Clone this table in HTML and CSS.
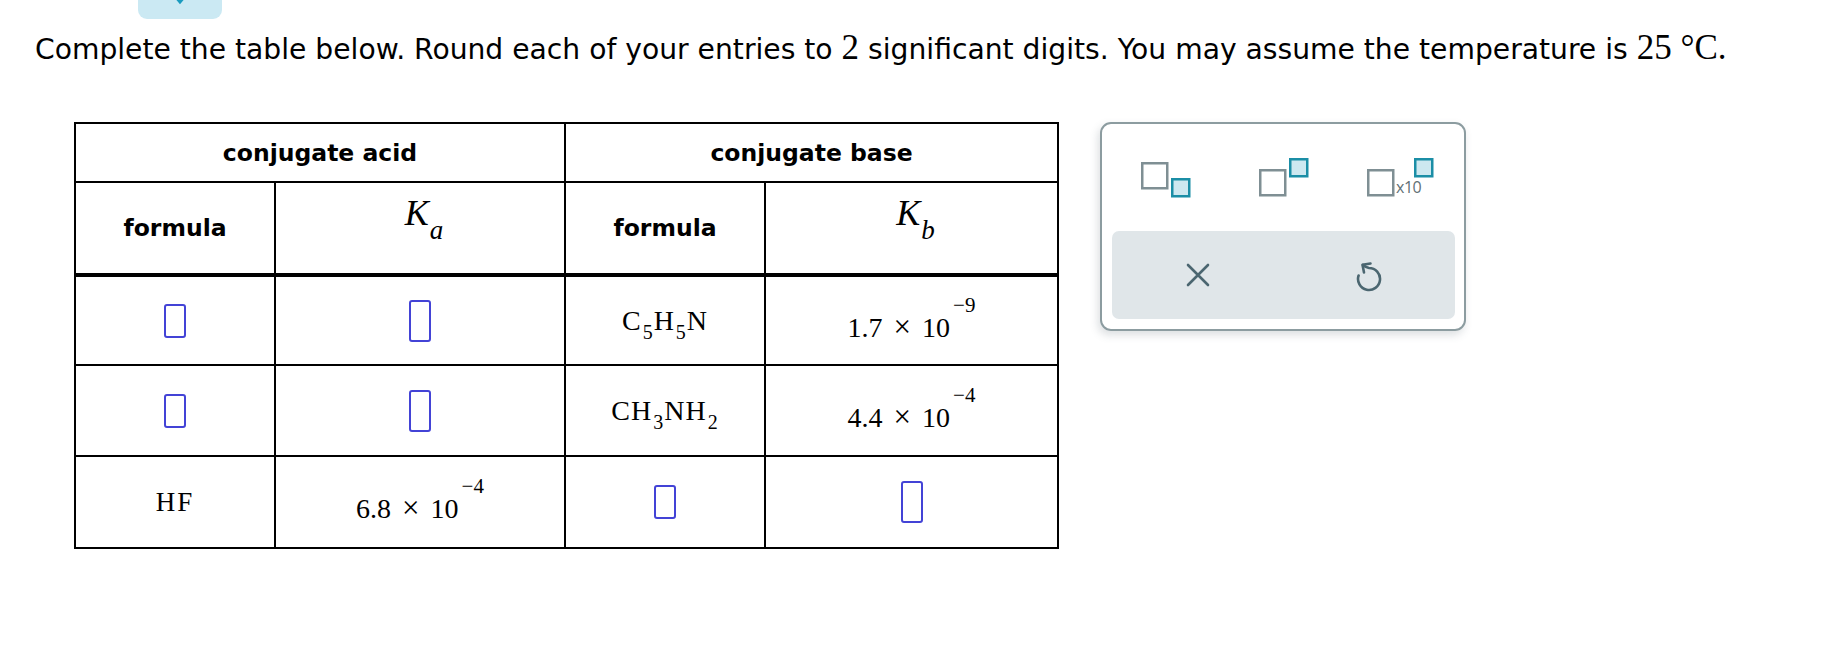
FILE: index.html
```html
<!DOCTYPE html>
<html>
<head>
<meta charset="utf-8">
<link rel="stylesheet" href="styles.css">
</head>
<body>
<div class="page">
  <div class="topbar">
    <div class="topbtn">
      <svg class="chev" width="14" height="6" viewBox="0 0 14 6"><path d="M2 -4 L7 2 L12 -4" fill="none" stroke="#1b9bbf" stroke-width="3" stroke-linecap="round"/></svg>
    </div>
  </div>
  <p class="prompt">Complete the table below. Round each of your entries to <span class="m">2</span> significant digits. You may assume the temperature is <span class="m">25 °C.</span></p>
  <div class="work">
    <table class="grid">
      <colgroup><col class="c1"><col class="c2"><col class="c3"><col class="c4"></colgroup>
      <tr class="h1">
        <th colspan="2">conjugate acid</th>
        <th colspan="2">conjugate base</th>
      </tr>
      <tr class="h2">
        <th>formula</th>
        <th><span class="kk"><i>K</i><span class="ks">a</span></span></th>
        <th>formula</th>
        <th><span class="kk"><i>K</i><span class="ks">b</span></span></th>
      </tr>
      <tr class="r r1">
        <td><span class="box"></span></td>
        <td><span class="box tall"></span></td>
        <td><span class="chem">C<span class="sb">5</span>H<span class="sb">5</span>N</span></td>
        <td><span class="num">1.7<span class="x">×</span>10<span class="sp">−9</span></span></td>
      </tr>
      <tr class="r r2">
        <td><span class="box"></span></td>
        <td><span class="box tall"></span></td>
        <td><span class="chem">CH<span class="sb">3</span>NH<span class="sb">2</span></span></td>
        <td><span class="num">4.4<span class="x">×</span>10<span class="sp">−4</span></span></td>
      </tr>
      <tr class="r r3">
        <td><span class="chem hf">HF</span></td>
        <td><span class="num">6.8<span class="x">×</span>10<span class="sp">−4</span></span></td>
        <td><span class="box"></span></td>
        <td><span class="box tall"></span></td>
      </tr>
    </table>
    <div class="panel">
      <div class="tools">
        <div class="tool">
          <svg width="50" height="36" viewBox="0 0 50 36">
            <rect x="1.25" y="1.25" width="25" height="25" fill="#fff" stroke="#7f8f94" stroke-width="2.5"/>
            <rect x="31.25" y="17.25" width="17" height="17" fill="#cde8f0" stroke="#1b8ea6" stroke-width="2.5"/>
          </svg>
        </div>
        <div class="tool">
          <svg width="50" height="40" viewBox="0 0 50 40">
            <rect x="1.25" y="12.25" width="25" height="25" fill="#fff" stroke="#7f8f94" stroke-width="2.5"/>
            <rect x="31.25" y="1.25" width="17" height="17" fill="#cde8f0" stroke="#1b8ea6" stroke-width="2.5"/>
          </svg>
        </div>
        <div class="tool">
          <svg width="67" height="40" viewBox="0 0 67 40">
            <rect x="1.25" y="12.25" width="25" height="25" fill="#fff" stroke="#7f8f94" stroke-width="2.5"/>
            <text x="29" y="35" class="x10">x10</text>
            <rect x="48.25" y="1.25" width="17" height="17" fill="#cde8f0" stroke="#1b8ea6" stroke-width="2.5"/>
          </svg>
        </div>
      </div>
      <div class="actions">
        <div class="act">
          <svg width="24" height="24" viewBox="0 0 24 24"><path d="M2 2 L22 22 M22 2 L2 22" stroke="#4b6670" stroke-width="2.6" stroke-linecap="round"/></svg>
        </div>
        <div class="act">
          <svg width="28" height="34" viewBox="0 0 28 34"><path d="M8 7 Q11 9.6 14 10 A11 11 0 1 1 3.6 17.5" fill="none" stroke="#4b6670" stroke-width="2.6" stroke-linecap="round" stroke-linejoin="round"/><path d="M15.5 5.5 L7.5 6.8 L9 14.5" fill="none" stroke="#4b6670" stroke-width="2.6" stroke-linecap="round" stroke-linejoin="round"/></svg>
        </div>
      </div>
    </div>
  </div>
</div>
</body>
</html>
```
FILE: styles.css
```css
html, body {
  margin: 0;
  padding: 0;
  background: #fff;
}
.page {
  padding-left: 35px;
  font-family: "DejaVu Sans", Verdana, sans-serif;
  color: #000;
}
.topbar {
  height: 19px;
  padding-left: 103px;
}
.topbtn {
  width: 84px;
  height: 19px;
  background: #cbe9f3;
  border-radius: 0 0 9px 9px;
  display: flex;
  justify-content: center;
}
.chev {
  display: block;
}
.prompt {
  margin: 15px 0 0 0;
  font-size: 28.2px;
  line-height: 32px;
  white-space: nowrap;
}
.m {
  font-family: "Liberation Serif", "Times New Roman", serif;
  font-size: 35px;
  line-height: 20px;
}
.work {
  display: flex;
  align-items: flex-start;
  margin-top: 56px;
  padding-left: 39px;
  gap: 41px;
}
.grid {
  border-collapse: collapse;
  table-layout: fixed;
  width: 983px;
}
.c1 { width: 200px; }
.c2 { width: 290px; }
.c3 { width: 200px; }
.c4 { width: 293px; }
.grid th, .grid td {
  border: 2px solid #000;
  padding: 0;
  text-align: center;
  vertical-align: middle;
}
.grid th {
  font-size: 23.5px;
  font-weight: bold;
}
.h1 { height: 59px; }
.h2 { height: 93px; }
.h2 th { border-bottom: 4px solid #000; }
.r1 { height: 90px; }
.r2 { height: 91px; }
.r3 { height: 92px; }
.kk {
  font-family: "Liberation Serif", "Times New Roman", serif;
  font-weight: normal;
  font-size: 36px;
  position: relative;
  left: 4px;
  top: -15px;
}
.ks {
  font-style: italic;
  font-size: 27px;
  position: relative;
  top: 14px;
  margin-left: 1px;
}
.box {
  display: inline-block;
  width: 18px;
  height: 30px;
  border: 2px solid #4343d6;
  border-radius: 3px;
  vertical-align: middle;
}
.box.tall {
  height: 38px;
}
.chem, .num {
  font-family: "Liberation Serif", "Times New Roman", serif;
  font-size: 28px;
}
.chem {
  letter-spacing: 1px;
}
.hf {
  letter-spacing: 2px;
  font-size: 27px;
}
.sb {
  font-size: 20px;
  position: relative;
  top: 9px;
  margin-left: 1px;
}
.x {
  margin: 0 11px;
  font-size: 31px;
}
.num {
  position: relative;
  top: 6px;
}
.sp {
  font-size: 21px;
  position: relative;
  top: -25px;
  margin-left: 3px;
}
.panel {
  width: 366px;
  height: 209px;
  box-sizing: border-box;
  border: 2px solid #8c9ca0;
  border-radius: 11px;
  box-shadow: -2px 4px 8px rgba(60, 80, 90, 0.18);
  display: flex;
  flex-direction: column;
  padding: 0 9px 10px 10px;
}
.tools {
  flex: 1;
  display: grid;
  grid-template-columns: 1fr 1fr 1fr;
  align-items: center;
  justify-items: center;
}
.tool svg { display: block; }
.tool:first-child svg { margin-top: 4px; margin-right: 6px; }
.tool:nth-child(2) svg { margin-left: 1px; }
.tool:nth-child(3) svg { margin-left: 6px; }
.x10 {
  font-family: "Open Sans", "Noto Sans", sans-serif;
  font-size: 16px;
  fill: #5f7075;
  letter-spacing: -0.5px;
}
.actions {
  height: 88px;
  background: #e0e6e9;
  border-radius: 7px;
  display: grid;
  grid-template-columns: 1fr 1fr;
  align-items: center;
  justify-items: center;
}
.act svg { display: block; }
```
